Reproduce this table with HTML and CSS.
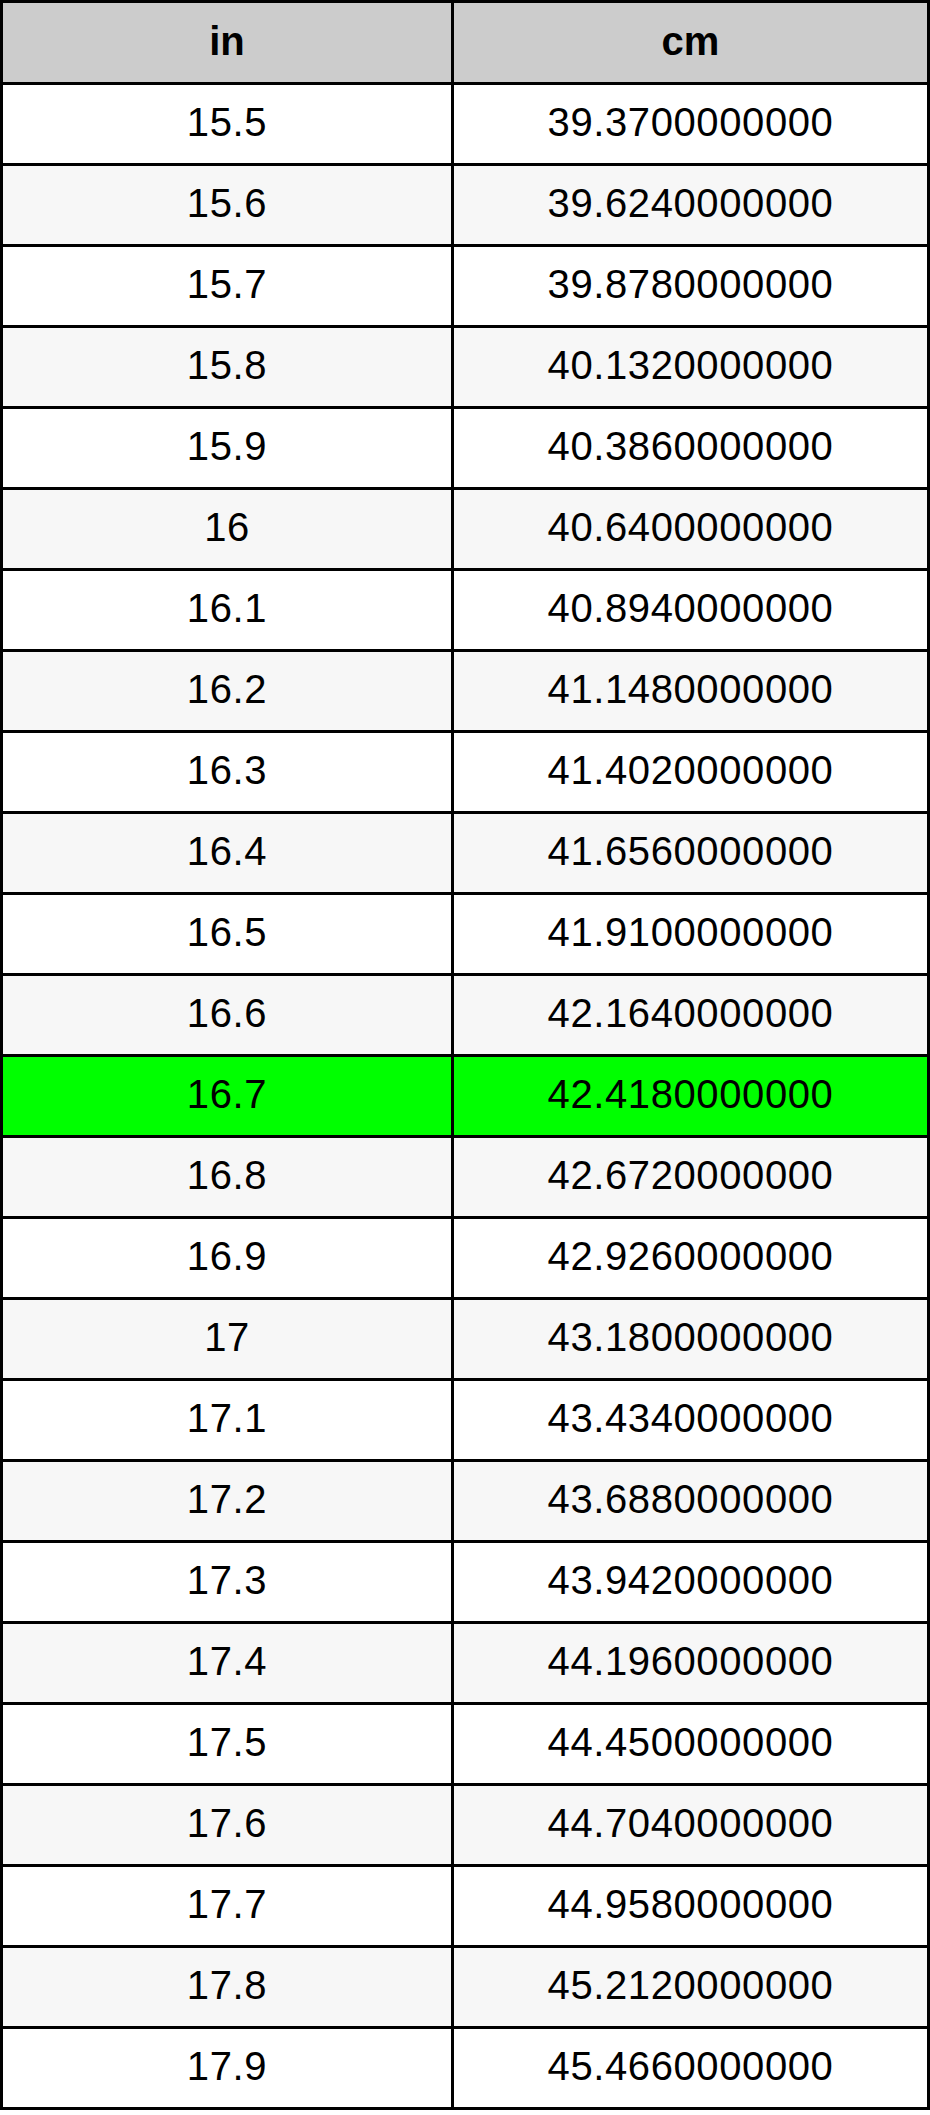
FILE: index.html
```html
<!DOCTYPE html>
<html lang="en">
<head>
<meta charset="utf-8">
<title>Inches to Centimeters</title>
<link rel="stylesheet" href="styles.css">
</head>
<body>
<table class="conv">
<thead>
<tr><th class="col-in">in</th><th class="col-cm">cm</th></tr>
</thead>
<tbody>
<tr><td>15.5</td><td>39.3700000000</td></tr>
<tr class="alt"><td>15.6</td><td>39.6240000000</td></tr>
<tr><td>15.7</td><td>39.8780000000</td></tr>
<tr class="alt"><td>15.8</td><td>40.1320000000</td></tr>
<tr><td>15.9</td><td>40.3860000000</td></tr>
<tr class="alt"><td>16</td><td>40.6400000000</td></tr>
<tr><td>16.1</td><td>40.8940000000</td></tr>
<tr class="alt"><td>16.2</td><td>41.1480000000</td></tr>
<tr><td>16.3</td><td>41.4020000000</td></tr>
<tr class="alt"><td>16.4</td><td>41.6560000000</td></tr>
<tr><td>16.5</td><td>41.9100000000</td></tr>
<tr class="alt"><td>16.6</td><td>42.1640000000</td></tr>
<tr class="hl"><td>16.7</td><td>42.4180000000</td></tr>
<tr class="alt"><td>16.8</td><td>42.6720000000</td></tr>
<tr><td>16.9</td><td>42.9260000000</td></tr>
<tr class="alt"><td>17</td><td>43.1800000000</td></tr>
<tr><td>17.1</td><td>43.4340000000</td></tr>
<tr class="alt"><td>17.2</td><td>43.6880000000</td></tr>
<tr><td>17.3</td><td>43.9420000000</td></tr>
<tr class="alt"><td>17.4</td><td>44.1960000000</td></tr>
<tr><td>17.5</td><td>44.4500000000</td></tr>
<tr class="alt"><td>17.6</td><td>44.7040000000</td></tr>
<tr><td>17.7</td><td>44.9580000000</td></tr>
<tr class="alt"><td>17.8</td><td>45.2120000000</td></tr>
<tr><td>17.9</td><td>45.4660000000</td></tr>
</tbody>
</table>
</body>
</html>
```
FILE: styles.css
```css
html, body {
  margin: 0;
  padding: 0;
  background: #fff;
}
.conv {
  width: 930px;
  table-layout: fixed;
  border-collapse: separate;
  border-spacing: 3px;
  background: #000;
  font-family: "Liberation Sans", Arial, sans-serif;
  font-size: 40px;
  color: #000;
}
.conv th {
  height: 77px;
  padding: 0 0 2px 0;
  background: #cccccc;
  font-weight: bold;
  text-align: center;
  vertical-align: middle;
}
.col-in { width: 448px; }
.col-cm { width: 473px; }
.conv td {
  height: 74px;
  padding: 0 0 4px 0;
  background: #ffffff;
  text-align: center;
  vertical-align: middle;
  letter-spacing: 0.6px;
}
.conv tr.alt td { background: #f7f7f7; }
.conv tr.hl td { background: #00ff00; }
```
